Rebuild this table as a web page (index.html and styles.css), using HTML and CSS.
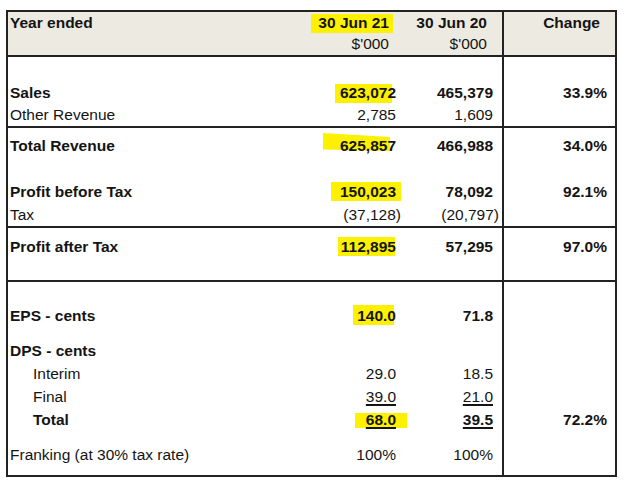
FILE: index.html
```html
<!DOCTYPE html>
<html>
<head>
<meta charset="utf-8">
<link rel="stylesheet" href="styles.css">
</head>
<body>
<table class="fin">
  <colgroup>
    <col class="c-label">
    <col class="c-a">
    <col class="c-b">
    <col class="c-chg">
  </colgroup>
  <tr class="hd hd1">
    <td class="lbl b">Year ended</td>
    <td class="a b"><span class="hl hl-h">30 Jun 21</span></td>
    <td class="bcol b">30 Jun 20</td>
    <td class="chg b">Change</td>
  </tr>
  <tr class="hd hd2">
    <td class="lbl"></td>
    <td class="a">$'000</td>
    <td class="bcol">$'000</td>
    <td class="chg"></td>
  </tr>

  <tr class="sp sp24"><td></td><td></td><td></td><td class="chg"></td></tr>
  <tr class="r b">
    <td class="lbl">Sales</td>
    <td class="a"><span class="hl hl-1">623,072</span></td>
    <td class="bcol">465,379</td>
    <td class="chg">33.9%</td>
  </tr>
  <tr class="r r22">
    <td class="lbl">Other Revenue</td>
    <td class="a">2,785</td>
    <td class="bcol">1,609</td>
    <td class="chg"></td>
  </tr>

  <tr class="sp sep sp6"><td></td><td></td><td></td><td class="chg"></td></tr>
  <tr class="r b">
    <td class="lbl">Total Revenue</td>
    <td class="a"><span class="hl hl-2">625,857</span></td>
    <td class="bcol">466,988</td>
    <td class="chg">34.0%</td>
  </tr>
  <tr class="sp sp23"><td></td><td></td><td></td><td class="chg"></td></tr>
  <tr class="r b">
    <td class="lbl">Profit before Tax</td>
    <td class="a"><span class="hl hl-3">150,023</span></td>
    <td class="bcol">78,092</td>
    <td class="chg">92.1%</td>
  </tr>
  <tr class="r">
    <td class="lbl">Tax</td>
    <td class="a neg">(37,128)</td>
    <td class="bcol neg">(20,797)</td>
    <td class="chg"></td>
  </tr>

  <tr class="sp sep sp7"><td></td><td></td><td></td><td class="chg"></td></tr>
  <tr class="r b">
    <td class="lbl">Profit after Tax</td>
    <td class="a"><span class="hl hl-4">112,895</span></td>
    <td class="bcol">57,295</td>
    <td class="chg">97.0%</td>
  </tr>
  <tr class="sp sp22"><td></td><td></td><td></td><td class="chg"></td></tr>

  <tr class="sp sep sp22"><td></td><td></td><td></td><td class="chg"></td></tr>
  <tr class="r b">
    <td class="lbl">EPS - cents</td>
    <td class="a"><span class="hl hl-5">140.0</span></td>
    <td class="bcol">71.8</td>
    <td class="chg"></td>
  </tr>
  <tr class="sp sp12"><td></td><td></td><td></td><td class="chg"></td></tr>
  <tr class="r b">
    <td class="lbl">DPS - cents</td>
    <td class="a"></td>
    <td class="bcol"></td>
    <td class="chg"></td>
  </tr>
  <tr class="r">
    <td class="lbl ind">Interim</td>
    <td class="a">29.0</td>
    <td class="bcol">18.5</td>
    <td class="chg"></td>
  </tr>
  <tr class="r">
    <td class="lbl ind">Final</td>
    <td class="a"><span class="ul">39.0</span></td>
    <td class="bcol"><span class="ul">21.0</span></td>
    <td class="chg"></td>
  </tr>
  <tr class="r b">
    <td class="lbl ind">Total</td>
    <td class="a"><span class="hl hl-6"><span class="ul">68.0</span></span></td>
    <td class="bcol"><span class="ul">39.5</span></td>
    <td class="chg">72.2%</td>
  </tr>
  <tr class="sp sp12"><td></td><td></td><td></td><td class="chg"></td></tr>
  <tr class="r">
    <td class="lbl">Franking (at 30% tax rate)</td>
    <td class="a">100%</td>
    <td class="bcol">100%</td>
    <td class="chg"></td>
  </tr>
  <tr class="sp sp9"><td></td><td></td><td></td><td class="chg"></td></tr>
</table>
</body>
</html>
```

FILE: styles.css
```css
html, body {
  margin: 0;
  padding: 0;
  background: #ffffff;
}

body {
  font-family: "Liberation Sans", Arial, sans-serif;
  font-size: 15.5px;
  color: #141414;
}

.fin {
  box-sizing: border-box;
  width: 611px;
  margin: 10px 0 0 6px;
  border: 2px solid #222;
  border-collapse: separate;
  border-spacing: 0;
  table-layout: fixed;
}

.c-label { width: 293px; }
.c-a { width: 100px; }
.c-b { width: 101px; }
.c-chg { width: 113px; }

.fin td {
  padding: 0;
  line-height: 23px;
  height: 23px;
  white-space: nowrap;
  vertical-align: middle;
}

.b td, td.b { font-weight: bold; }

.hd td { background: #edeae1; }
.hd1 td { height: 21px; line-height: 21px; }
.hd2 td { height: 22px; line-height: 22px; border-bottom: 2px solid #222; }

.r22 td { height: 22px; line-height: 22px; }

.sp td { line-height: 0; font-size: 0; }
.sp6 td { height: 6px; }
.sp7 td { height: 7px; }
.sp9 td { height: 9px; }
.sp12 td { height: 12px; }
.sp22 td { height: 22px; }
.sp23 td { height: 23px; }
.sp24 td { height: 24px; }

.sep td { border-top: 2px solid #222; }

.fin td.chg {
  border-left: 2px solid #222;
  text-align: right;
  padding-right: 8px;
}
.hd td.chg { padding-right: 15px; }

.fin td.lbl { padding-left: 2px; }
.fin td.ind { padding-left: 25px; }

.fin td.a { text-align: right; padding-right: 5px; }
.fin td.a.neg { padding-right: 0; }
.fin td.bcol { text-align: right; padding-right: 9px; }
.fin td.bcol.neg { padding-right: 3px; }

.hd td.a { padding-right: 12px; }
.hd td.bcol { padding-right: 15px; }

.ul {
  text-decoration: underline;
  text-decoration-thickness: 1.5px;
  text-underline-offset: 2px;
}

/* marker highlights */
.hl {
  position: relative;
  z-index: 0;
  display: inline-block;
  line-height: 18px;
}
.hl::before {
  content: "";
  position: absolute;
  z-index: -1;
  background: #fdf000;
}
.hl-h::before { left: -7px; right: -4px; top: 0; bottom: -1px; }
.hl-1::before { left: -5px; right: 4px; top: 0; bottom: -1px; }
.hl-2::before {
  left: -17px; right: 6px; top: -4px; bottom: 4px;
  clip-path: polygon(0 0, 100% 22%, 100% 100%, 0 92%);
}
.hl-3::before { left: -9px; right: -5px; top: -1px; bottom: 0; }
.hl-4::before { left: -3px; right: 1px; top: -1px; bottom: 0; }
.hl-5::before { left: -4px; right: 2px; top: -2px; bottom: 0; }
.hl-6::before { left: -11px; right: -11px; top: 2px; bottom: 1px; }
```
